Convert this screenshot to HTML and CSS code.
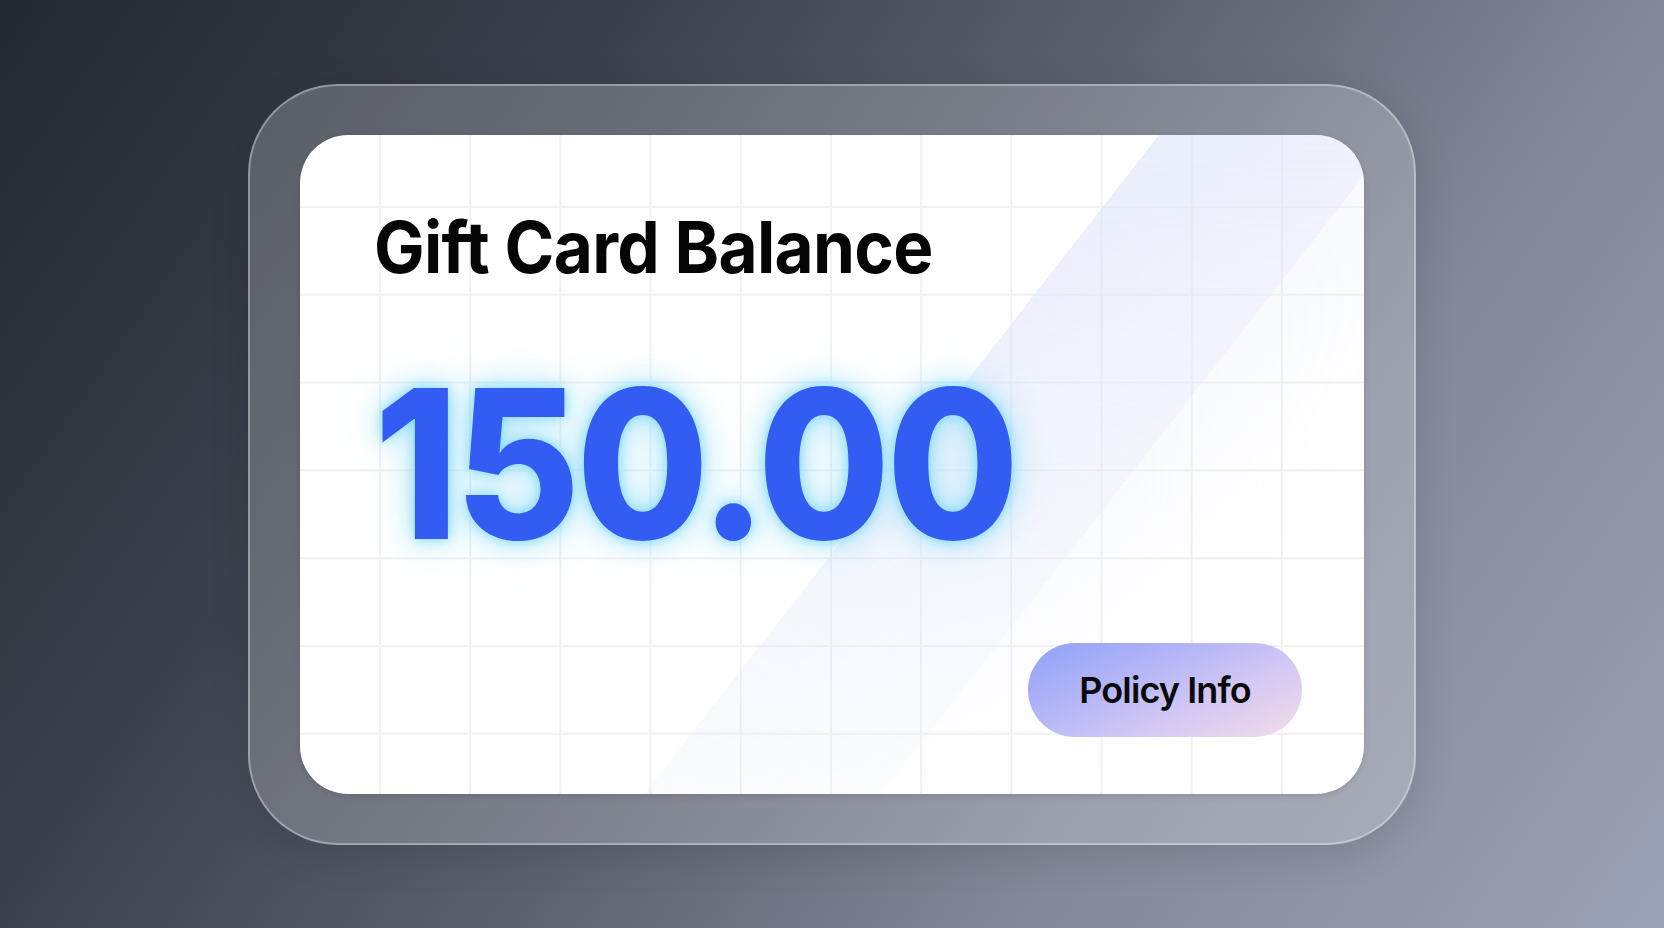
FILE: index.html
```html
<!DOCTYPE html>
<html lang="en">
<head>
<meta charset="utf-8">
<title>Gift Card Balance</title>
<link rel="stylesheet" href="styles.css">
</head>
<body>
  <main class="frame">
    <section class="card">
      <h1 class="title">Gift Card Balance</h1>
      <div class="amount">150.00</div>
      <button class="policy" type="button">Policy Info</button>
    </section>
  </main>
</body>
</html>
```
FILE: styles.css
```css
* { box-sizing: border-box; }
html, body { margin: 0; height: 100%; }
body {
  width: 1664px;
  height: 928px;
  display: flex;
  align-items: center;
  justify-content: center;
  font-family: Inter, "Noto Sans", "Liberation Sans", sans-serif;
  background: linear-gradient(125deg, #222731 0%, #3c414d 28%, #5c6170 50%, #848999 72%, #9ca2b5 100%);
  overflow: hidden;
}
.frame {
  padding: 49px 50px;
  border-radius: 90px;
  border: 2px solid rgba(255, 255, 255, 0.34);
  background: rgba(255, 255, 255, 0.21);
  box-shadow: 0 10px 40px rgba(0, 0, 0, 0.12);
}
.card {
  position: relative;
  width: 1064px;
  height: 659px;
  border-radius: 48px;
  padding: 76px 62px 57px 74px;
  display: flex;
  flex-direction: column;
  overflow: hidden;
  background-color: #ffffff;
  background-image:
    linear-gradient(to right, #f1f1f3 0, #f1f1f3 1.5px, transparent 1.5px),
    linear-gradient(to bottom, #f1f1f3 0, #f1f1f3 1.5px, transparent 1.5px);
  background-size: 90.2px 87.8px, 90.2px 87.8px;
  background-position: 79px 0, 0 71px;
  box-shadow: 0 2px 6px rgba(0, 0, 0, 0.12);
}
.card::before {
  content: "";
  position: absolute;
  inset: 0;
  pointer-events: none;
  background: linear-gradient(128deg,
    transparent 0, transparent 54.4%,
    rgba(222, 228, 250, 0.62) 54.4%,
    rgba(222, 228, 250, 0.5) 69.4%,
    rgba(232, 236, 252, 0.3) 69.4%,
    rgba(240, 243, 253, 0) 82%);
  -webkit-mask-image: linear-gradient(to bottom, #000 0%, rgba(0,0,0,0.7) 50%, rgba(0,0,0,0.2) 100%);
  mask-image: linear-gradient(to bottom, #000 0%, rgba(0,0,0,0.7) 50%, rgba(0,0,0,0.2) 100%);
}
.title {
  position: relative;
  margin: 0;
  font-size: 72px;
  line-height: 1;
  font-weight: 700;
  color: #050505;
  letter-spacing: -0.01em;
  transform: scaleX(0.937);
  transform-origin: 0 50%;
}
.amount {
  position: relative;
  margin-top: 77px;
  font-size: 207px;
  line-height: 1;
  font-weight: 800;
  color: #335df2;
  letter-spacing: -0.02em;
  transform: scaleX(0.928);
  transform-origin: 0 50%;
  text-shadow: 0 0 12px rgba(120, 215, 250, 0.9), 0 0 30px rgba(140, 220, 250, 0.65), 0 0 52px rgba(160, 225, 250, 0.4);
}
.policy {
  position: relative;
  margin-top: auto;
  align-self: flex-end;
  width: 274px;
  height: 94px;
  border: none;
  border-radius: 47px;
  font-family: inherit;
  font-size: 36px;
  font-weight: 600;
  color: #0a0a0a;
  background: linear-gradient(155deg, #8ea2f8 0%, #b3b5f7 35%, #d4c8f4 65%, #f4dde8 100%);
  letter-spacing: -0.025em;
  padding: 0;
}
```
